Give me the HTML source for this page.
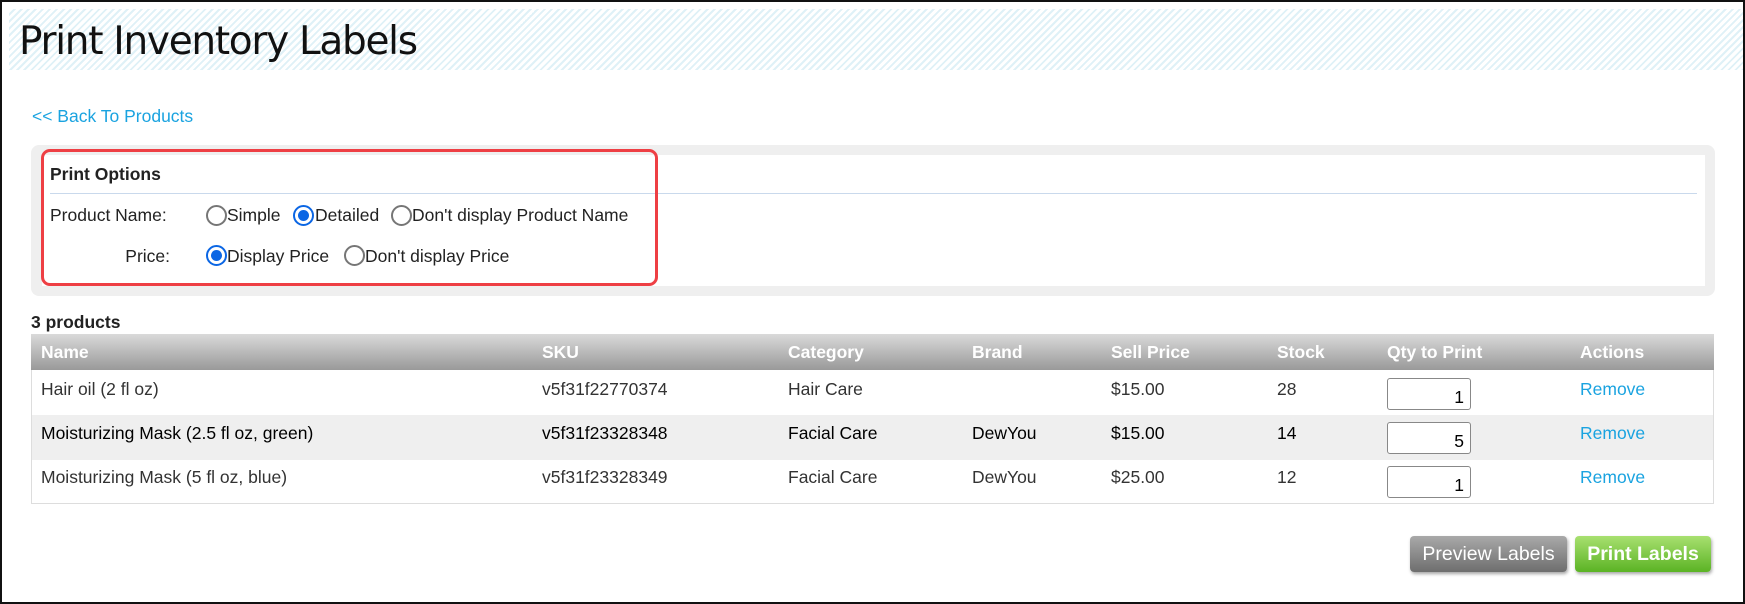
<!DOCTYPE html>
<html><head><meta charset="utf-8"><style>
*{box-sizing:border-box;margin:0;padding:0}
body{width:1745px;height:604px;overflow:hidden;background:#fff;font-family:"Liberation Sans",Arial,sans-serif;position:relative}
.frame{position:absolute;left:0;top:0;width:1745px;height:604px;border:2px solid #111}
.banner{position:absolute;left:9px;top:9px;width:1734px;height:61px;background:repeating-linear-gradient(135deg,#ffffff 0 3px,#dff1f7 3px 5px)}
.title{position:absolute;left:19px;top:19px;font-family:"DejaVu Sans","Liberation Sans",sans-serif;font-size:39px;color:#111;letter-spacing:-1.3px}
.back{position:absolute;left:32px;top:106px;font-size:17.5px;color:#1aa3e0}
.gbox{position:absolute;left:31px;top:145px;width:1684px;height:151px;background:#efefef;border-radius:8px}
.wbox{position:absolute;left:42px;top:155px;width:1663px;height:131px;background:#fff}
.red{position:absolute;left:41px;top:149px;width:617px;height:137px;border:3px solid #ee3f44;border-radius:9px}
.po{position:absolute;left:50px;top:164px;font-size:17.5px;font-weight:bold;color:#222}
.line{position:absolute;left:50px;top:193px;width:1647px;height:1px;background:#c9d9ec}
.lbl{position:absolute;font-size:17.5px;color:#222}
.r{position:absolute;width:21px;height:21px;border-radius:50%;border:2px solid #767676;background:#fff}
.r.on{border:2px solid #0b66e4}
.r.on::after{content:"";position:absolute;left:3px;top:3px;width:11px;height:11px;border-radius:50%;background:#0b66e4}
.cnt{position:absolute;left:31px;top:312px;font-size:17.5px;font-weight:bold;color:#222}
.thead{position:absolute;left:31px;top:334px;width:1683px;height:36px;background:linear-gradient(#dadada,#999)}
.th{position:absolute;top:342px;font-size:17.5px;font-weight:bold;color:#fff}
.row{position:absolute;left:31px;width:1683px;height:45px;border-left:1px solid #ddd;border-right:1px solid #ddd}
.td{position:absolute;font-size:17.5px;color:#333}
.inp{position:absolute;width:84px;height:32px;border:1px solid #888;border-radius:3px;background:#fff;font-size:17.5px;text-align:right;padding:8px 6px 0 0;color:#000}
.rm{position:absolute;font-size:17.5px;color:#1aa3e0}
.btn{position:absolute;top:536px;height:36px;border-radius:4px;font-size:19.5px;color:#fff;text-align:center;line-height:36px;box-shadow:1px 2px 3px rgba(0,0,0,.35)}
</style></head><body>
<div class="frame"></div>
<div class="banner"></div>
<div class="title">Print Inventory Labels</div>
<div class="back">&lt;&lt; Back To Products</div>
<div class="gbox"></div><div class="wbox"></div>
<div class="po">Print Options</div>
<div class="line"></div>
<div class="lbl" style="left:50px;top:205px">Product Name:</div>
<div class="r" style="left:206px;top:205px"></div><div class="lbl" style="left:227px;top:205px">Simple</div>
<div class="r on" style="left:293px;top:205px"></div><div class="lbl" style="left:315px;top:205px">Detailed</div>
<div class="r" style="left:391px;top:205px"></div><div class="lbl" style="left:412px;top:205px">Don't display Product Name</div>
<div class="lbl" style="left:60px;width:110px;text-align:right;top:246px">Price:</div>
<div class="r on" style="left:206px;top:245px"></div><div class="lbl" style="left:227px;top:246px">Display Price</div>
<div class="r" style="left:344px;top:245px"></div><div class="lbl" style="left:365px;top:246px">Don't display Price</div>
<div class="red"></div>
<div class="cnt">3 products</div>
<div class="thead"></div>
<div class="th" style="left:41px">Name</div><div class="th" style="left:542px">SKU</div><div class="th" style="left:788px">Category</div><div class="th" style="left:972px">Brand</div><div class="th" style="left:1111px">Sell Price</div><div class="th" style="left:1277px">Stock</div><div class="th" style="left:1387px">Qty to Print</div><div class="th" style="left:1580px">Actions</div>
<div class="row" style="top:370px;background:#fff"></div>
<div class="row" style="top:415px;background:#efefef"></div>
<div class="row" style="top:460px;background:#fff;border-bottom:1px solid #ddd;height:44px"></div>
<div class="td" style="left:41px;top:379px">Hair oil (2 fl oz)</div><div class="td" style="left:542px;top:379px">v5f31f22770374</div><div class="td" style="left:788px;top:379px">Hair Care</div><div class="td" style="left:1111px;top:379px">$15.00</div><div class="td" style="left:1277px;top:379px">28</div>
<div class="inp" style="left:1387px;top:378px">1</div><div class="rm" style="left:1580px;top:379px">Remove</div>
<div class="td" style="left:41px;top:423px;color:#000">Moisturizing Mask (2.5 fl oz, green)</div><div class="td" style="left:542px;top:423px;color:#000">v5f31f23328348</div><div class="td" style="left:788px;top:423px;color:#000">Facial Care</div><div class="td" style="left:972px;top:423px;color:#000">DewYou</div><div class="td" style="left:1111px;top:423px;color:#000">$15.00</div><div class="td" style="left:1277px;top:423px;color:#000">14</div>
<div class="inp" style="left:1387px;top:422px">5</div><div class="rm" style="left:1580px;top:423px">Remove</div>
<div class="td" style="left:41px;top:467px">Moisturizing Mask (5 fl oz, blue)</div><div class="td" style="left:542px;top:467px">v5f31f23328349</div><div class="td" style="left:788px;top:467px">Facial Care</div><div class="td" style="left:972px;top:467px">DewYou</div><div class="td" style="left:1111px;top:467px">$25.00</div><div class="td" style="left:1277px;top:467px">12</div>
<div class="inp" style="left:1387px;top:466px">1</div><div class="rm" style="left:1580px;top:467px">Remove</div>
<div class="btn" style="left:1410px;width:157px;background:linear-gradient(#a9a9a9,#6e6e6e)">Preview Labels</div>
<div class="btn" style="left:1575px;width:136px;background:linear-gradient(#a8e070,#5bb324);font-weight:bold">Print Labels</div>
</body></html>
